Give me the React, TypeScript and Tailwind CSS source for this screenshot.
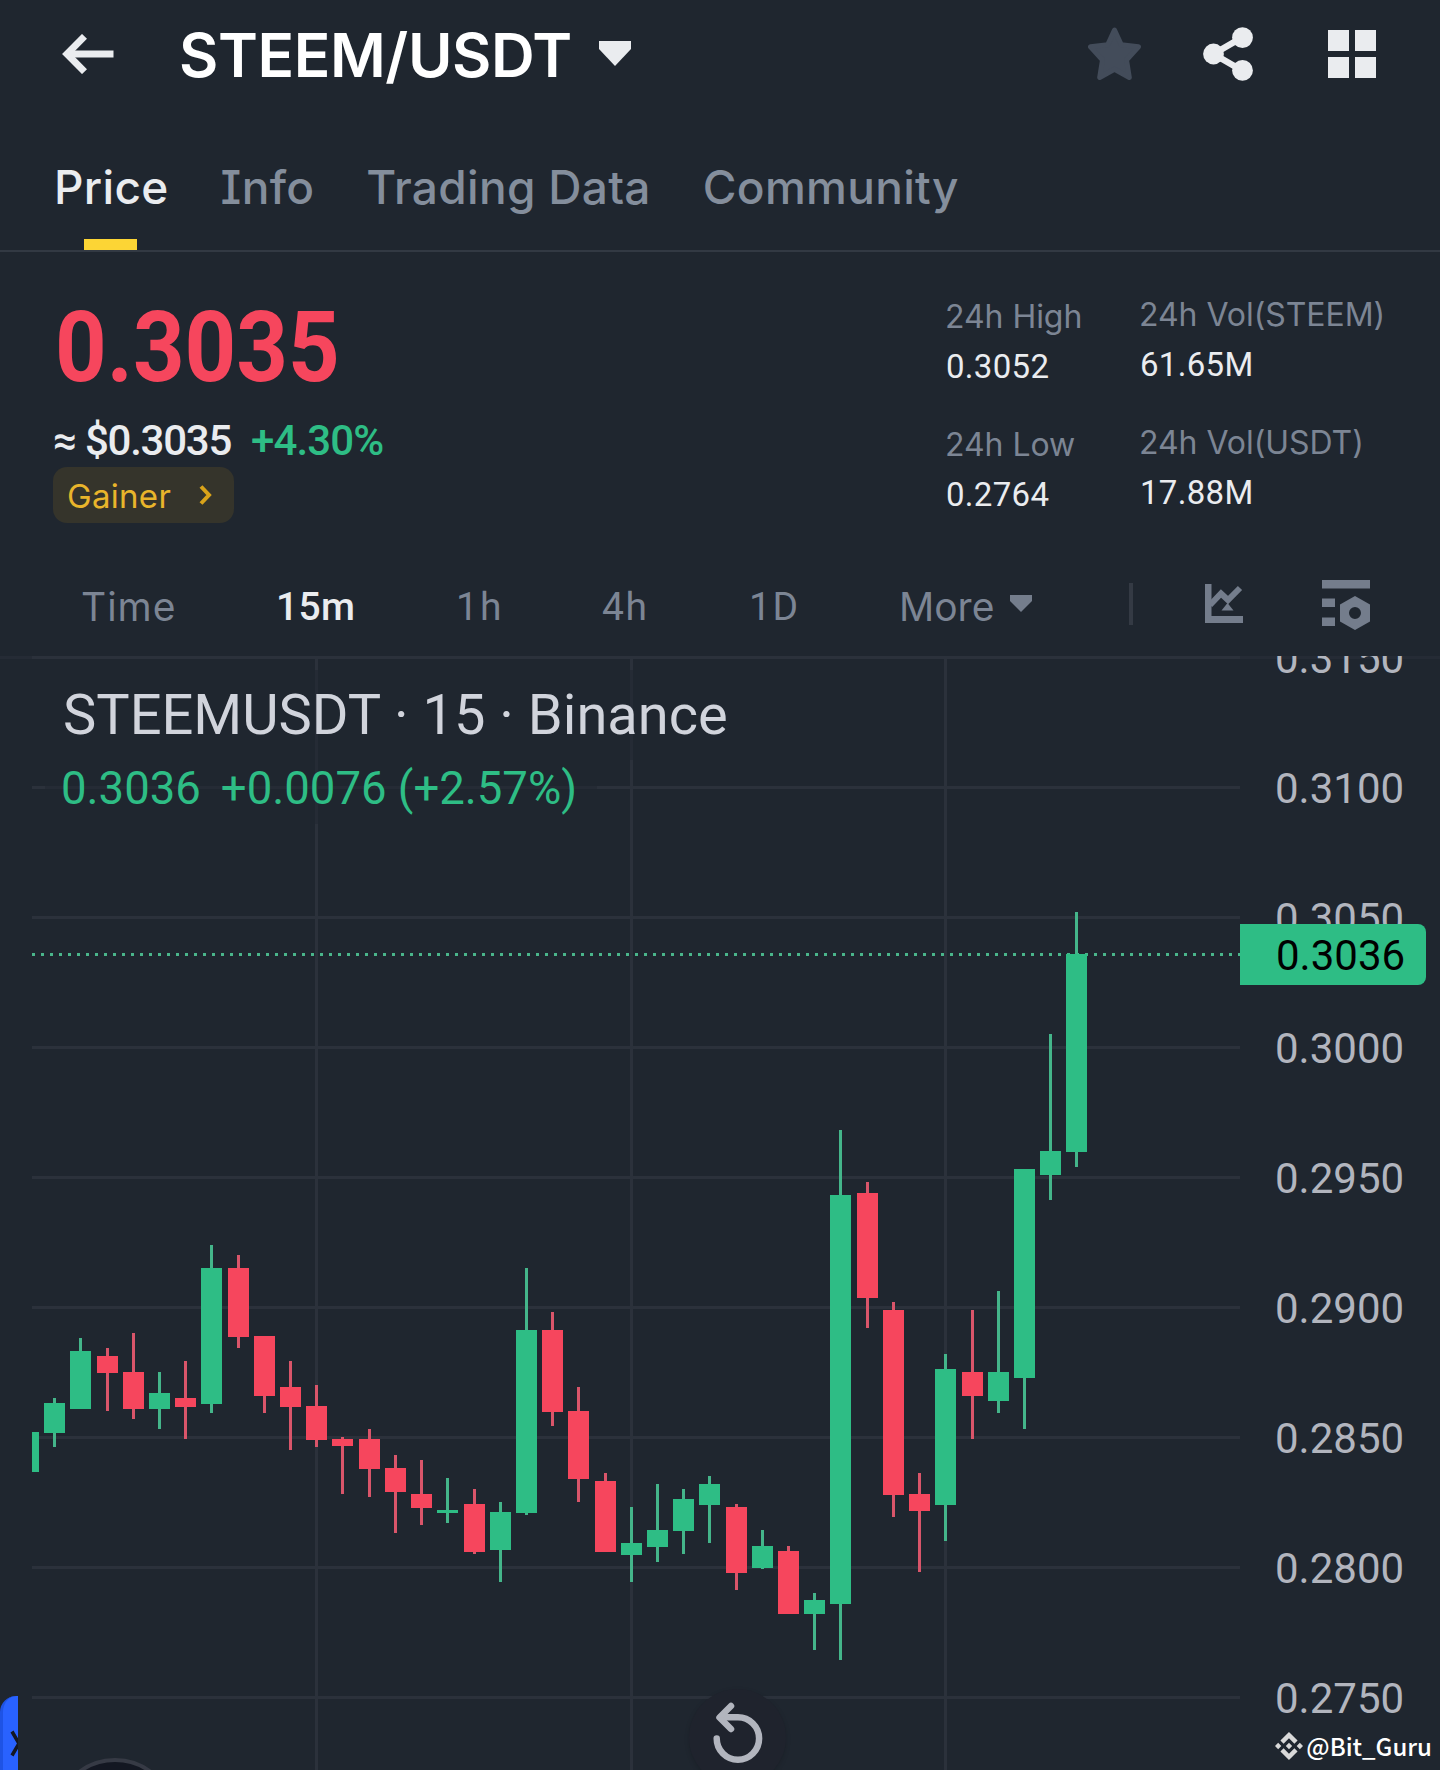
import { SiBinance } from "react-icons/si";

const tabs = ["Price", "Info", "Trading Data", "Community"];

const stats = [
  [
    { label: "24h High", value: "0.3052" },
    { label: "24h Low", value: "0.2764" },
  ],
  [
    { label: "24h Vol(STEEM)", value: "61.65M" },
    { label: "24h Vol(USDT)", value: "17.88M" },
  ],
];

const axisPrices = ["0.3150", "0.3100", "0.3050", "0.3000", "0.2950", "0.2900", "0.2850", "0.2800", "0.2750"];

// x, body top, body bottom, wick top, wick bottom, up (1) / down (0)
const candles = [
  [44, 747, 777, 742, 791, 1],
  [70, 695, 753, 682, 753, 1],
  [97, 700, 717, 692, 755, 0],
  [123, 716, 753, 677, 763, 0],
  [149, 737, 753, 716, 773, 1],
  [175, 742, 751, 705, 783, 0],
  [201, 612, 748, 589, 757, 1],
  [228, 612, 681, 599, 692, 0],
  [254, 680, 740, 680, 757, 0],
  [280, 731, 751, 705, 794, 0],
  [306, 750, 784, 729, 791, 0],
  [332, 783, 790, 781, 838, 0],
  [359, 783, 813, 773, 841, 0],
  [385, 812, 836, 799, 877, 0],
  [411, 838, 852, 804, 869, 0],
  [437, 854, 857, 822, 867, 1],
  [464, 848, 896, 833, 898, 0],
  [490, 856, 894, 846, 926, 1],
  [516, 674, 857, 612, 859, 1],
  [542, 674, 756, 656, 770, 0],
  [568, 755, 823, 731, 846, 0],
  [595, 825, 896, 817, 896, 0],
  [621, 887, 899, 851, 926, 1],
  [647, 874, 891, 828, 906, 1],
  [673, 843, 875, 833, 898, 1],
  [699, 828, 849, 820, 887, 1],
  [726, 851, 917, 848, 934, 0],
  [752, 890, 912, 874, 913, 1],
  [778, 895, 958, 890, 958, 0],
  [804, 944, 958, 937, 994, 1],
  [830, 539, 948, 474, 1004, 1],
  [857, 537, 642, 526, 672, 0],
  [883, 654, 839, 646, 861, 0],
  [909, 838, 855, 817, 916, 0],
  [935, 713, 849, 698, 885, 1],
  [962, 716, 740, 654, 783, 0],
  [988, 716, 745, 635, 757, 1],
  [1014, 513, 722, 513, 773, 1],
  [1040, 495, 519, 378, 544, 1],
  [1066, 298, 496, 256, 511, 1],
];

function Header() {
  return (
    <header className="mb-0.5 flex h-[107px] shrink-0 items-center pl-[62px] pr-[64px] text-[#eaecef]">
      <svg className="h-10 w-[52px]" viewBox="0 0 52 40" fill="none" stroke="currentColor" strokeWidth="7">
        <path d="M51.5 20H5" />
        <path d="M22.5 2.4 5 20l17.5 17.6" />
      </svg>
      <h1 className="ml-[65px] pt-[3px] font-[Inter,sans-serif] text-[60.5px] leading-[70px] font-semibold tracking-[-0.4px] text-white">
        STEEM/USDT
      </h1>
      <svg className="ml-[27px] h-[25px] w-8" viewBox="0 0 32 25" fill="currentColor">
        <path d="M0 0h32v8L16 25 0 8z" />
      </svg>
      <svg className="ml-auto h-[54px] w-[54px] text-[#434c5a]" viewBox="0 0 54 54" fill="currentColor" stroke="currentColor" strokeWidth="5" strokeLinejoin="round">
        <path d="M26.5 3l6.8 14.8 17.2 2L38.500 33l2.800 17.500-14.800-8.200-14.800 8.200L14.500 33 2.500 19.800l17.200-2z" />
      </svg>
      <svg className="ml-[61px] h-[54px] w-[50px]" viewBox="0 0 50 54" fill="currentColor">
        <path d="M10.5 27 39 10.500M10.500 27 39 43.500" stroke="currentColor" strokeWidth="6.5" />
        <circle cx="10.5" cy="27" r="10.4" />
        <circle cx="39.5" cy="10.6" r="10.4" />
        <circle cx="39.5" cy="43.4" r="10.4" />
      </svg>
      <div className="ml-[75px] grid grid-cols-2 gap-1.5">
        <span className="size-[21px] bg-current" />
        <span className="size-[21px] bg-current" />
        <span className="size-[21px] bg-current" />
        <span className="size-[21px] bg-current" />
      </div>
    </header>
  );
}

function Tabs() {
  return (
    <nav className="flex h-[143px] shrink-0 gap-[52px] border-b-2 border-[#323943] pl-[54px] font-[Inter,sans-serif] text-[46px] leading-[60px] font-medium tracking-[0.3px] [font-feature-settings:'cv08']">
      {tabs.map((tab, i) => (
        <div key={tab} className="flex flex-col items-center pt-[48px]">
          <span className={i === 0 ? "text-[#eaecef]" : "text-[#848e9c]"}>{tab}</span>
          {i === 0 && <span className="mt-auto mr-0.5 h-[11px] w-[53px] bg-[#fcd535]" />}
        </div>
      ))}
    </nav>
  );
}

function Ticker() {
  return (
    <section className="flex h-[305px] shrink-0 pl-[53px]">
      <div className="flex w-[892px] flex-col items-start pt-[46px]">
        <div className="ml-0.5 origin-left scale-x-[0.92] text-[98px] leading-[100px] font-bold text-[#f6465d]">0.3035</div>
        <div className="mt-[18px] flex gap-5 text-[42px] leading-[50px] font-medium">
          <span className="tracking-[-1.25px] text-[#eaecef]">≈ $0.3035</span>
          <span className="tracking-[-0.9px] text-[#2ebd85]">+4.30%</span>
        </div>
        <div className="mt-px flex h-14 w-[181px] items-center rounded-[14px] bg-[#35342b] pl-[14px] text-[#e9b52b]">
          <span className="pt-0.5 font-[Inter,sans-serif] text-[33px] leading-10 tracking-[0.3px]">Gainer</span>
          <svg className="ml-[28px] h-5 w-[13px]" viewBox="0 0 13 20" fill="none" stroke="#d9a31a" strokeWidth="4">
            <path d="M2 1.5 10 10l-8 8.5" />
          </svg>
        </div>
      </div>
      {stats.map((column, i) => (
        <dl key={i} className={i === 0 ? "flex w-[194px] flex-col gap-7 pt-[40px]" : "flex flex-col gap-7 pt-[38px]"}>
          {column.map((s) => (
            <div key={s.label}>
              <dt className="font-[Inter,sans-serif] text-[32px] leading-[50px] tracking-[-0.05px] whitespace-nowrap text-[#7c8594]">{s.label}</dt>
              <dd className="pl-px text-[33px] leading-[50px] tracking-[0.3px] text-[#eaecef]">{s.value}</dd>
            </div>
          ))}
        </dl>
      ))}
    </section>
  );
}

function Toolbar() {
  return (
    <div className="flex h-[102px] shrink-0 items-center border-b-[3px] border-[#252b35] pl-[81px] text-[39px] leading-[50px] text-[#7c8594]">
      <span className="w-[195px] font-[Inter,sans-serif] tracking-[1px]">Time</span>
      <span className="w-[180px] font-medium tracking-[0.3px] text-[#eaecef]">15m</span>
      <span className="w-[146px] tracking-[2px]">1h</span>
      <span className="w-[147px] tracking-[1.5px]">4h</span>
      <span className="w-[150px] tracking-[1.5px]">1D</span>
      <span className="w-[111px] font-[Inter,sans-serif]">More</span>
      <svg className="mb-1.5 h-[17px] w-[22px]" viewBox="0 0 22 17" fill="#747d8c">
        <path d="M0 0h22v6L11 17 0 6z" />
      </svg>
      <span className="mb-1.5 ml-[97px] h-[42px] w-1 bg-[#343a44]" />
      <svg className="mb-1.5 ml-[72px] h-[39px] w-[38px]" viewBox="0 0 38 39" fill="#747d8c">
        <path d="M0 0h6.500v32H38v7H0z" />
        <path d="M5 21 16 9.500l7 6.500L35 4" fill="none" stroke="#747d8c" strokeWidth="6" />
        <path d="M22.500 19l6 7.500h-12z" />
      </svg>
      <svg className="mb-1 ml-[79px] h-[50px] w-12" viewBox="0 0 48 50" fill="#747d8c">
        <path d="M0 0h48v8.500H0zM0 18.500h13V27H0zM0 37.500h13V46H0z" />
        <path fillRule="evenodd" d="M33 16l15 8.500v17L33 50l-15-8.500v-17zM33 27a6 6 0 1 0 0 12 6 6 0 0 0 0-12z" />
      </svg>
    </div>
  );
}

function Chart() {
  return (
    <section className="relative -mt-[3px] flex h-[1114px] overflow-hidden">
      <svg className="h-[1114px] w-[1240px] shrink-0" viewBox="0 0 1240 1114" shapeRendering="crispEdges">
        {axisPrices.map((p, i) => (
          <rect key={p} x="32" y={i * 130} width="1208" height="3" fill="#2b313b" />
        ))}
        {[315, 630, 944].map((x) => (
          <rect key={x} x={x} y="0" width="3" height="1114" fill="#2b313b" />
        ))}
        <rect x="45" y="14" width="703" height="90" fill="#1f262f" opacity="0.5" />
        <rect x="45" y="104" width="552" height="64" fill="#1f262f" opacity="0.5" />
        <line x1="32" x2="1240" y1="298.5" y2="298.5" stroke="#4ab68b" strokeWidth="3" strokeDasharray="3 6" />
        <rect x="32" y="776" width="7" height="40" fill="#2ebd85" />
        {candles.map(([x, top, bottom, high, low, up]) => (
          <g key={x}>
            <rect x={x + 9} y={high} width="3" height={low - high} fill={up ? "#44b58a" : "#d9556a"} />
            <rect x={x} y={top} width="21" height={bottom - top} fill={up ? "#2ebd85" : "#f6465d"} />
          </g>
        ))}
      </svg>

      <div className="-mt-[62px] pl-[35px] text-[42px] leading-[130px] text-[#b2b5be]">
        {axisPrices.map((p) => (
          <div key={p}>{p}</div>
        ))}
      </div>

      {/* last price */}
      <div className="absolute top-[268px] left-[1240px] h-[61px] w-[186px] rounded-r-lg bg-[#2ebd85] pt-px pl-9 text-[42px] leading-[62px] text-black">
        0.3036
      </div>

      {/* legend */}
      <div className="absolute top-[24px] left-[61px] flex flex-col">
        <div className="pl-0.5 text-[56px] leading-[70px] text-[#d1d4dc]">STEEMUSDT · 15 · Binance</div>
        <div className="mt-[9px] flex gap-[20px] text-[45.5px] leading-[60px] text-[#2ebd85]">
          <span>0.3036</span>
          <span>+0.0076 (+2.57%)</span>
        </div>
      </div>

      {/* drawing toolbar handle */}
      <div className="absolute top-[1040px] left-0 h-[120px] w-[18px] overflow-hidden rounded-tl-[16px] border-l-[3px] border-[#1e53e5] bg-[#2962ff]">
        <svg className="mt-[34px] ml-[7px] h-[27px] w-4" viewBox="0 0 16 27" fill="none" stroke="#131722" strokeWidth="3.5">
          <path d="M2 1.500 9 13.500 2 25.500" />
        </svg>
      </div>
      <div className="absolute top-[1102px] left-[54px] size-[122px] rounded-full border-4 border-[#363a45] bg-[#131722]" />

      {/* reset chart */}
      <div className="absolute top-[1033px] left-[689px] flex size-[97px] items-center justify-center rounded-full bg-[#1f232d] shadow-[0_2px_5px_rgba(0,0,0,0.15)]">
        <svg className="h-[60px] w-[50px] overflow-visible" viewBox="0 0 50 60" fill="none" stroke="#b2b5be" strokeWidth="6.5" strokeLinecap="round" strokeLinejoin="round">
          <path d="M3.7 30.500a21.200 21.200 0 1 0 21.200-21.200H8" />
          <path d="M18 -2 6.500 9.500 18 21" />
        </svg>
      </div>

      <div className="absolute right-[8px] bottom-0 flex h-[48px] items-center gap-[3px] font-['Noto_Sans_CJK_SC',sans-serif] text-[24px] leading-[36px] font-medium text-white">
        <SiBinance className="size-7 text-[#d9d9d9]" />
        <span>@Bit_Guru</span>
      </div>
    </section>
  );
}

export default function App() {
  return (
    <main className="flex h-[1770px] w-[1440px] flex-col overflow-hidden bg-[#1f262f] font-[Roboto,sans-serif]">
      <Header />
      <Tabs />
      <Ticker />
      <Toolbar />
      <Chart />
    </main>
  );
}
